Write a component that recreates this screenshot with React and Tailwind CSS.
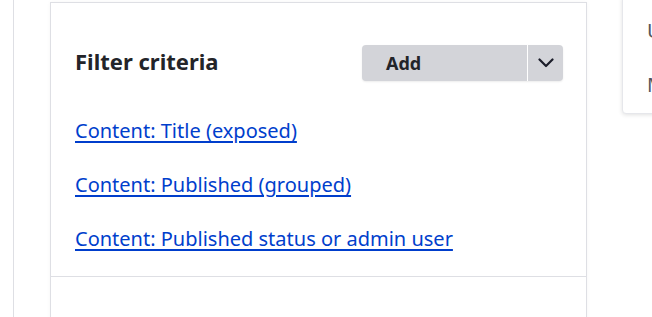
import React from "react";

const font = { fontFamily: '"Noto Sans", "Open Sans", sans-serif' };

export default function App() {
  return (
    <div
      className="w-[652px] h-[317px] bg-white overflow-hidden flex items-start"
      style={font}
    >
      <div className="w-[14px] h-[317px] shrink-0 border-r border-[#dedfe4]" />
      <div className="w-[36px] shrink-0" />
      <div className="w-[537px] shrink-0 mt-[2px] h-[320px] border-t border-l border-r border-[#dedfe4] bg-white flex flex-col shadow-[0_0_4px_rgba(0,0,0,0.04)]">
        <div className="pl-[24px] pr-[23px] border-b border-[#dedfe4] h-[274px]">
          <div className="flex items-center justify-between mt-[42px]">
            <h2 className="text-[22px] font-bold text-[#232429] leading-[30px] mb-[5px]">
              Filter criteria
            </h2>
            <div className="flex h-[36px] w-[201px] rounded-[4px] bg-[#d3d4d9] shadow-[0_1px_2px_rgba(0,0,0,0.08)] overflow-hidden">
              <button className="flex-1 text-left pl-[24px] text-[18px] font-bold text-[#232429]">
                Add
              </button>
              <div className="w-px bg-white" />
              <button className="w-[35px] flex items-center justify-center text-[#232429]">
                <svg width="16" height="10" viewBox="0 0 16 10" fill="none">
                  <path d="M1.5 1.5 L8 8 L14.5 1.5" stroke="#1b1d2a" strokeWidth="2.2" strokeLinecap="round" strokeLinejoin="round" />
                </svg>
              </button>
            </div>
          </div>
          <div className="flex flex-col gap-[24px] mt-[35px]">
            {[
              "Content: Title (exposed)",
              "Content: Published (grouped)",
              "Content: Published status or admin user",
            ].map((t) => (
              <a
                key={t}
                href="#"
                className="text-[20px] leading-[30px] text-[#003ecc] underline decoration-[2px] underline-offset-[3px] self-start"
              >
                {t}
              </a>
            ))}
          </div>
        </div>
      </div>
      <div className="w-[35px] shrink-0" />
      <div className="w-[60px] shrink-0 h-[118px] -mt-[4px] bg-white rounded-[4px] border border-[#e6e7eb] shadow-[0_1px_4px_rgba(0,0,0,0.12)] pl-[24px] pt-[19px] flex flex-col gap-[24px] text-[20px] leading-[30px] text-[#55565b]">
        <span>U</span>
        <span>M</span>
      </div>
    </div>
  );
}
